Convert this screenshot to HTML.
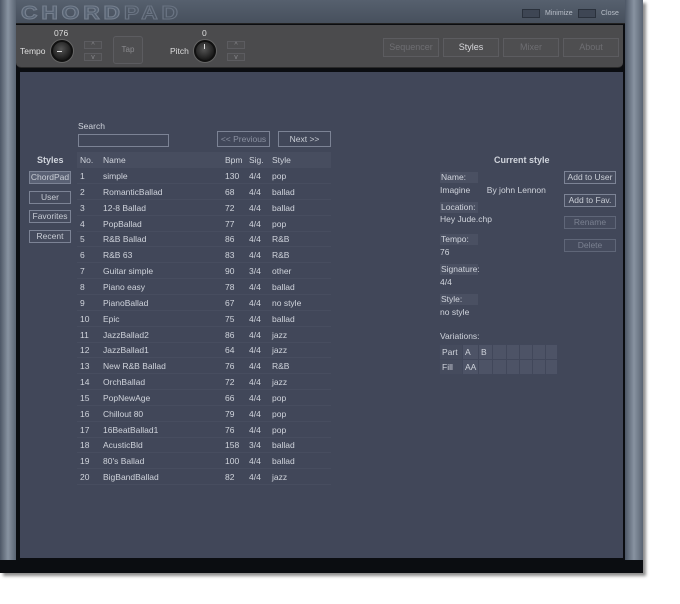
<!DOCTYPE html>
<html><head><style>
*{margin:0;padding:0;box-sizing:border-box}
body{width:680px;height:604px;background:#fff;font-family:"Liberation Sans",sans-serif;font-size:8.5px;color:#d0d4dc;position:relative;overflow:hidden}
.abs{position:absolute}
.frame{left:0;top:0;width:643px;height:573px;background:#0b0d11;box-shadow:3px 3px 3px rgba(0,0,0,.45)}
.lbar{left:0;top:0;width:16px;height:560px;background:linear-gradient(90deg,#4d5766,#8893a1 50%,#5a6472)}
.rbar{left:625px;top:0;width:18px;height:560px;background:linear-gradient(90deg,#4d5766,#8893a1 50%,#5a6472)}
.top{left:16px;top:0;width:609px;height:24px;background:linear-gradient(#56606e,#47505d);border-bottom:1px solid #222}
.tool{left:16px;top:25px;width:607px;height:43px;background:#4b4b4d;border-radius:0 0 5px 5px;border-bottom:1px solid #2a2a2a}
.content{left:20px;top:72px;width:603px;height:486px;background:#414759}
.btn{position:absolute;border:1px solid #5c5c60;background:#4e4e50;color:#6e6e72;font-size:9px;text-align:center}
.ar{color:#8a8a8e;font-size:7px;line-height:7px}
.knob{position:absolute;width:22px;height:22px;border-radius:50%;background:radial-gradient(circle at 45% 40%,#555,#1b1b1b 70%);border:2px solid #111;box-shadow:0 0 0 1px #666}
.sb{position:absolute;border:1px solid #7c8395;color:#c8ccd4;text-align:center;font-size:8.5px;height:13px;line-height:11px;background:#454b5d}
.row{position:absolute;left:77px;width:254px;height:16px;border-bottom:1px solid #474d5f}
.row span{position:absolute;top:3px}
.lab{position:absolute;background:#4a5062;width:38px;height:11px;padding-left:1px;line-height:11px}
.grid{table-layout:fixed;width:118px}
.grid td{height:15px;background:#4d5366;border:1px solid #41475a;padding-left:2px;overflow:hidden;white-space:nowrap}
</style></head><body>
<div class="abs frame"></div>
<div class="abs lbar"></div><div class="abs rbar"></div>
<div class="abs top"></div>
<div class="abs" style="left:21px;top:3px;font:bold 18px 'Liberation Sans',sans-serif;letter-spacing:3px;color:#566272;-webkit-text-stroke:1px #76808f;transform:scaleX(1.27);transform-origin:left">CHORD<span style="color:transparent;-webkit-text-stroke:1px #6a7483">PAD</span></div>
<div class="abs" style="left:522px;top:9px;width:18px;height:9px;background:#3e4654;border:1px solid #2a313c"></div>
<div class="abs" style="left:545px;top:10px;font-size:7px;color:#b8bec8">Minimize</div>
<div class="abs" style="left:578px;top:9px;width:18px;height:9px;background:#3e4654;border:1px solid #2a313c"></div>
<div class="abs" style="left:601px;top:10px;font-size:7px;color:#b8bec8">Close</div>
<div class="abs tool"></div>
<div class="abs" style="left:54px;top:28px;color:#ddd">076</div>
<div class="abs" style="left:20px;top:46px;color:#ddd">Tempo</div>
<div class="knob" style="left:51px;top:40px"></div>
<div class="abs" style="left:57px;top:51px;width:5px;height:1px;background:#ddd"></div>
<div class="btn ar" style="left:84px;top:41px;width:18px;height:8px">^</div>
<div class="btn ar" style="left:84px;top:53px;width:18px;height:8px">v</div>
<div class="btn" style="left:113px;top:36px;width:30px;height:28px;line-height:26px;color:#8a8a8e;font-size:8px;border-radius:3px">Tap</div>
<div class="abs" style="left:202px;top:28px;color:#ddd">0</div>
<div class="abs" style="left:170px;top:46px;color:#ddd">Pitch</div>
<div class="knob" style="left:194px;top:40px"></div>
<div class="abs" style="left:204px;top:44px;width:1px;height:5px;background:#ddd"></div>
<div class="btn ar" style="left:227px;top:41px;width:18px;height:8px">^</div>
<div class="btn ar" style="left:227px;top:53px;width:18px;height:8px">v</div>
<div class="btn" style="left:383px;top:38px;width:56px;height:19px;line-height:17px">Sequencer</div>
<div class="btn" style="left:443px;top:38px;width:56px;height:19px;line-height:17px;color:#d8d8dc">Styles</div>
<div class="btn" style="left:503px;top:38px;width:56px;height:19px;line-height:17px">Mixer</div>
<div class="btn" style="left:563px;top:38px;width:56px;height:19px;line-height:17px">About</div>
<div class="abs content"></div>
<div class="abs" style="left:78px;top:121px">Search</div>
<div class="abs" style="left:78px;top:134px;width:91px;height:13px;border:1px solid #7c8395"></div>
<div class="sb" style="left:217px;top:131px;width:53px;height:16px;line-height:14px;color:#8a90a0;background:none">&lt;&lt; Previous</div>
<div class="sb" style="left:278px;top:131px;width:53px;height:16px;line-height:14px;background:none">Next &gt;&gt;</div>
<div class="abs" style="left:37px;top:155px;font-weight:bold;font-size:9px">Styles</div>
<div class="sb" style="left:29px;top:171px;width:42px;background:#5a6174">ChordPad</div>
<div class="sb" style="left:29px;top:191px;width:42px">User</div>
<div class="sb" style="left:29px;top:210px;width:42px">Favorites</div>
<div class="sb" style="left:29px;top:230px;width:42px">Recent</div>
<div class="row" style="top:152px;background:#474d5f"><span style="left:3px;top:3px">No.</span><span style="left:26px">Name</span><span style="left:148px">Bpm</span><span style="left:172px">Sig.</span><span style="left:195px">Style</span></div>
<div id="rows"></div>
<div class="abs" style="left:494px;top:155px;font-weight:bold;font-size:9px">Current style</div>
<div class="lab" style="left:440px;top:172px">Name:</div>
<div class="abs" style="left:440px;top:185px">Imagine&nbsp;&nbsp;&nbsp;&nbsp;&nbsp;&nbsp;&nbsp;By john Lennon</div>
<div class="lab" style="left:440px;top:202px">Location:</div>
<div class="abs" style="left:440px;top:214px">Hey Jude.chp</div>
<div class="lab" style="left:440px;top:234px">Tempo:</div>
<div class="abs" style="left:440px;top:247px">76</div>
<div class="lab" style="left:440px;top:264px">Signature:</div>
<div class="abs" style="left:440px;top:277px">4/4</div>
<div class="lab" style="left:440px;top:294px">Style:</div>
<div class="abs" style="left:440px;top:307px">no style</div>
<div class="abs" style="left:440px;top:331px">Variations:</div>
<table class="abs grid" style="left:439px;top:344px;border-collapse:collapse">
<colgroup><col style="width:23px"><col style="width:16px"><col style="width:14px"><col style="width:14px"><col style="width:13px"><col style="width:13px"><col style="width:13px"><col style="width:12px"></colgroup>
<tr><td style="background:#454b5d">Part</td><td>A</td><td>B</td><td></td><td></td><td></td><td></td><td></td></tr>
<tr><td style="background:#454b5d">Fill</td><td>AA</td><td></td><td></td><td></td><td></td><td></td><td></td></tr>
</table>
<div class="sb" style="left:564px;top:171px;width:52px">Add to User</div>
<div class="sb" style="left:564px;top:194px;width:52px">Add to Fav.</div>
<div class="sb" style="left:564px;top:216px;width:52px;color:#7a8090;border-color:#5f6678">Rename</div>
<div class="sb" style="left:564px;top:239px;width:52px;color:#7a8090;border-color:#5f6678">Delete</div>
<script>
var d=[["simple",130,"4/4","pop"],["RomanticBallad",68,"4/4","ballad"],["12-8 Ballad",72,"4/4","ballad"],["PopBallad",77,"4/4","pop"],["R&B Ballad",86,"4/4","R&B"],["R&B 63",83,"4/4","R&B"],["Guitar simple",90,"3/4","other"],["Piano easy",78,"4/4","ballad"],["PianoBallad",67,"4/4","no style"],["Epic",75,"4/4","ballad"],["JazzBallad2",86,"4/4","jazz"],["JazzBallad1",64,"4/4","jazz"],["New R&B Ballad",76,"4/4","R&B"],["OrchBallad",72,"4/4","jazz"],["PopNewAge",66,"4/4","pop"],["Chillout 80",79,"4/4","pop"],["16BeatBallad1",76,"4/4","pop"],["AcusticBld",158,"3/4","ballad"],["80's Ballad",100,"4/4","ballad"],["BigBandBallad",82,"4/4","jazz"]];
var h="";d.forEach(function(r,i){var t=(168+i*15.85).toFixed(1);h+='<div class="row" style="top:'+t+'px"><span style="left:3px">'+(i+1)+'</span><span style="left:26px">'+r[0].replace("&","&amp;")+'</span><span style="left:148px">'+r[1]+'</span><span style="left:172px">'+r[2]+'</span><span style="left:195px">'+r[3].replace("&","&amp;")+'</span></div>';});
document.getElementById("rows").outerHTML=h;
</script>
</body></html>
